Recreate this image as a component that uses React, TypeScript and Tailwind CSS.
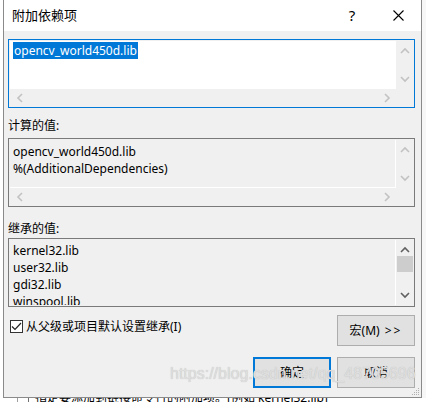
import type { ReactNode } from "react";

const FONT = { fontFamily: "'Noto Sans', 'Noto Sans CJK SC', sans-serif" };

function Chevron({ dir, color }: { dir: "up" | "down" | "left" | "right"; color: string }) {
  const d = {
    up: "M1 6 L5 2 L9 6",
    down: "M1 2 L5 6 L9 2",
    left: "M6 1 L2 5 L6 9",
    right: "M2 1 L6 5 L2 9",
  }[dir];
  const vertical = dir === "up" || dir === "down";
  return (
    <svg
      width={vertical ? 10 : 8}
      height={vertical ? 8 : 10}
      viewBox={vertical ? "0 0 10 8" : "0 0 8 10"}
      fill="none"
      stroke={color}
      strokeWidth="1.6"
    >
      <path d={d} />
    </svg>
  );
}

// multi-line list box with vertical (and optional horizontal) scrollbar
function ListBox({
  focused,
  white,
  hScroll,
  thumb,
  children,
}: {
  focused?: boolean;
  white?: boolean;
  hScroll?: boolean;
  thumb?: boolean;
  children: ReactNode;
}) {
  const arrow = thumb ? "#606060" : "#c2c2c2";
  return (
    <div
      className={`h-[69px] border p-px bg-[#f0f0f0] flex flex-col ${
        focused ? "border-[#0078d7]" : "border-[#7a7a7a]"
      }`}
    >
      <div className="flex flex-1 min-h-0">
        <div
          className={`flex-1 overflow-hidden pl-[3px] pt-px ${
            white ? "bg-white" : "border-r border-b border-white"
          } ${!hScroll ? "border-b-0" : ""}`}
        >
          {children}
        </div>
        <div className="w-[17px] flex flex-col items-center justify-between py-[6px] bg-[#f0f0f0]">
          <Chevron dir="up" color={arrow} />
          {thumb && <div className="w-[16px] h-[16px] bg-[#cdcdcd] -mt-[10px] mb-[8px]" />}
          <Chevron dir="down" color={arrow} />
        </div>
      </div>
      {hScroll && (
        <div className="h-[17px] flex items-center justify-between pl-[6px] pr-[22px]">
          <Chevron dir="left" color="#c2c2c2" />
          <Chevron dir="right" color="#c2c2c2" />
        </div>
      )}
    </div>
  );
}

function Button({ primary, children }: { primary?: boolean; children: ReactNode }) {
  return (
    <div
      className={`w-[78px] h-[31px] bg-[#e1e1e1] flex items-center justify-center text-[12px] text-black ${
        primary ? "border-2 border-[#0078d7]" : "border border-[#adadad]"
      }`}
    >
      {children}
    </div>
  );
}

export default function App() {
  return (
    <div className="w-[426px] h-[402px] bg-[#f5f5f5] overflow-hidden relative flex flex-col" style={FONT}>
      <div className="flex flex-1 min-h-0">
        <div className="w-[3px] bg-white" />
        {/* dialog window */}
        <div className="w-[419px] h-[398px] border-x border-b border-[#8a8a8a] bg-[#f0f0f0] flex flex-col relative">
          {/* title bar */}
          <div className="h-[31px] bg-white flex items-center text-black">
            <span className="pl-[8px] text-[13px] flex-1">附加依赖项</span>
            <span className="text-[15px] w-[46px] text-center">?</span>
            <span className="w-[46px] flex justify-center">
              <svg width="11" height="11" viewBox="0 0 11 11" stroke="#000" strokeWidth="1.1">
                <path d="M0.5 0.5 L10.5 10.5 M10.5 0.5 L0.5 10.5" />
              </svg>
            </span>
          </div>

          <div className="flex flex-col pl-[4px] pr-[6px] pt-[8px] text-[12px] leading-[17px] text-black">
            <ListBox focused white hScroll>
              <span className="bg-[#0078d7] text-white px-px">opencv_world450d.lib</span>
            </ListBox>

            <div className="mt-[9px] mb-[4px] h-[17px]">计算的值:</div>
            <ListBox hScroll>
              <div className="pt-[2px]">opencv_world450d.lib</div>
              <div>%(AdditionalDependencies)</div>
            </ListBox>

            <div className="mt-[13px] mb-[-2px] h-[17px]">继承的值:</div>
            <div className="mt-[3px]">
              <ListBox thumb>
                <div className="pt-px">kernel32.lib</div>
                <div>user32.lib</div>
                <div>gdi32.lib</div>
                <div>winspool.lib</div>
              </ListBox>
            </div>

            <div className="flex items-start mt-[8px]">
              <label className="flex items-center gap-[3px] pl-[2px] mt-[3px] flex-1">
                <span className="w-[13px] h-[13px] border border-[#333] bg-white flex items-center justify-center">
                  <svg width="11" height="9" viewBox="0 0 11 9" fill="none" stroke="#222" strokeWidth="1.2">
                    <path d="M1 4.5 L4 7.5 L10 1" />
                  </svg>
                </span>
                <span>从父级或项目默认设置继承(I)</span>
              </label>
              <Button>
                宏(M) <span className="ml-[5px] tracking-[2px]">&gt;&gt;</span>
              </Button>
            </div>

            <div className="flex justify-end gap-[6px] mt-[11px]">
              <Button primary>确定</Button>
              <Button>取消</Button>
            </div>
          </div>

          {/* resize grip */}
          <svg className="absolute right-[1px] bottom-[1px]" width="8" height="8" viewBox="0 0 8 8" fill="#b0b0b0">
            <rect x="6" y="0" width="1" height="1" />
            <rect x="4" y="2" width="1" height="1" />
            <rect x="6" y="2" width="1" height="1" />
            <rect x="2" y="4" width="1" height="1" />
            <rect x="4" y="4" width="1" height="1" />
            <rect x="6" y="4" width="1" height="1" />
            <rect x="0" y="6" width="1" height="1" />
            <rect x="2" y="6" width="1" height="1" />
            <rect x="4" y="6" width="1" height="1" />
            <rect x="6" y="6" width="1" height="1" />
          </svg>
        </div>
        <div className="flex-1 bg-[#f7f7f7]" />
      </div>

      {/* property page behind the dialog */}
      <div className="h-[4px] overflow-hidden flex shrink-0 bg-white">
        <div className="w-[18px] border-r border-[#a0a0a0]" />
        <div className="w-[11px] border-r border-[#707070]" />
        <div className="pl-[6px] text-[12px] leading-[12px] -mt-[6px] text-black whitespace-nowrap">
          指定要添加到链接命令行的附加项。[例如 kernel32.lib]
        </div>
      </div>

      {/* watermark */}
      <div
        className="absolute left-[170px] top-[362px] text-[16px] text-[#dedede] whitespace-nowrap"
        style={{ fontFamily: "'Liberation Sans', sans-serif", textShadow: "0 0 1px #bbb" }}
      >
        https://blog.csdn.net/qq_48705696
      </div>
    </div>
  );
}
